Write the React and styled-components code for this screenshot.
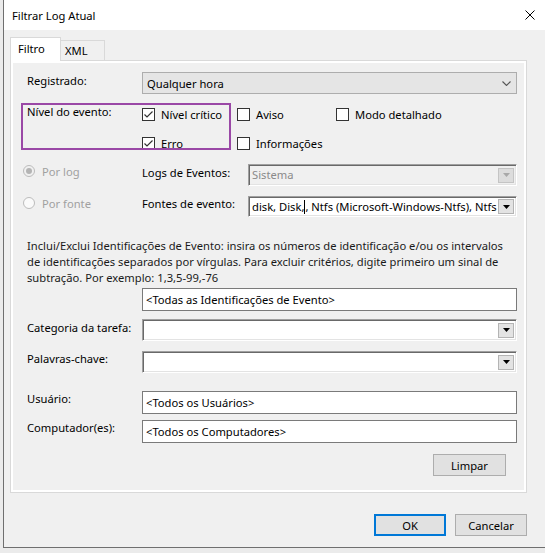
import React from 'react';
import styled, { createGlobalStyle } from 'styled-components';

const GlobalStyle = createGlobalStyle`
  html, body {
    margin: 0;
    background: #ebebeb;
  }
  body {
    font-family: "Noto Sans", "Open Sans", sans-serif;
    font-size: 11.2px;
    color: #000;
  }
  * {
    box-sizing: border-box;
  }
`;

const Window = styled.div`
  margin-left: 3px;
  width: 542px;
  background: #f0f0f0;
  border-left: 1px solid #6f6f6f;
  border-bottom: 1px solid #6f6f6f;
  display: flex;
  flex-direction: column;
`;

const TitleBar = styled.div`
  height: 30px;
  background: #fff;
  display: flex;
  align-items: center;
  justify-content: space-between;
  padding: 0 10px 0 8px;
`;

const Body = styled.div`
  padding: 7px 18px 11px 6px;
  display: flex;
  flex-direction: column;
`;

const TabStrip = styled.div`
  display: flex;
  align-items: flex-end;
  height: 24px;
  margin-bottom: -1px;
  position: relative;
  z-index: 1;
`;

const Tab = styled.div`
  width: ${p => p.$w}px;
  height: ${p => (p.$active ? 24 : 21)}px;
  background: ${p => (p.$active ? '#fff' : '#f0f0f0')};
  border: 1px solid #d9d9d9;
  border-bottom: ${p => (p.$active ? 'none' : '1px solid #d9d9d9')};
  border-left: ${p => (p.$active ? '1px solid #d9d9d9' : 'none')};
  padding: ${p => (p.$active ? '3px 0 0 7px' : '2px 0 0 4px')};
  line-height: 16px;
`;

const Panel = styled.div`
  position: relative;
  border: 1px solid #d9d9d9;
  background: #f0f0f0;
  box-shadow: inset 0 0 0 2px #fff;
  padding: 11px 9px 16px 16px;
  display: flex;
  flex-direction: column;
`;

const Highlight = styled.div`
  position: absolute;
  left: 10px;
  top: 42px;
  width: 210px;
  height: 47px;
  border: 2px solid #9a48a6;
  pointer-events: none;
  z-index: 2;
`;

const FieldRow = styled.div`
  display: grid;
  grid-template-columns: 115px 1fr;
  align-items: start;
  margin-top: ${p => p.$mt || 0}px;
`;

const Label = styled.div`
  line-height: 16px;
  padding-top: ${p => p.$pt ?? 1}px;
  white-space: nowrap;
  color: ${p => (p.$disabled ? '#a0a0a0' : '#000')};
`;

const Select = styled.div`
  height: 22px;
  background: #e5e5e5;
  border: 1px solid #adadad;
  display: flex;
  align-items: center;
  justify-content: space-between;
  padding: 0 5px 0 4px;
`;

const Combo = styled.div`
  height: ${p => p.$h}px;
  background: ${p => (p.$disabled ? '#f0f0f0' : '#fff')};
  color: ${p => (p.$disabled ? '#8a8a8a' : '#000')};
  border: 1px solid;
  border-color: #a0a0a0 #fff #fff #a0a0a0;
  box-shadow: inset 1px 1px 0 #696969, inset -1px -1px 0 #e3e3e3;
  display: flex;
  align-items: center;
  padding: 0 2px 0 3px;
`;

const ComboText = styled.div`
  flex: 1;
  min-width: 0;
  overflow: hidden;
  white-space: nowrap;
  line-height: 16px;
`;

const Caret = styled.span`
  display: inline-block;
  width: 1px;
  height: 14px;
  background: #000;
  vertical-align: -3px;
`;

const ArrowButton = styled.div`
  width: 16px;
  height: 15px;
  flex: none;
  background: ${p => (p.$disabled ? '#dcdcdc' : '#e3e3e3')};
  border: 1px solid ${p => (p.$disabled ? '#c4c4c4' : '#b4b4b4')};
  display: flex;
  align-items: center;
  justify-content: center;
`;

const TextBox = styled.div`
  height: 23px;
  background: #fff;
  border: 1px solid #7a7a7a;
  display: flex;
  align-items: center;
  padding-left: 3px;
  white-space: nowrap;
`;

const LevelRow = styled.div`
  display: grid;
  grid-template-columns: 115px 1fr;
  margin-top: 10px;
`;

const CheckGrid = styled.div`
  display: grid;
  grid-template-columns: 95px 99px auto;
  grid-auto-rows: 20px;
  row-gap: 9px;
`;

const CheckItem = styled.label`
  display: flex;
  align-items: center;
  gap: 6px;
  white-space: nowrap;
`;

const Box = styled.span`
  width: 13px;
  height: 13px;
  flex: none;
  background: #fff;
  border: 1px solid #333;
  display: flex;
  align-items: center;
  justify-content: center;
`;

const RadioRow = styled.div`
  display: grid;
  grid-template-columns: 119px 106px 1fr;
  align-items: start;
  margin-left: -4px;
  margin-top: ${p => p.$mt}px;
`;

const RadioItem = styled.div`
  display: flex;
  align-items: center;
  gap: 7px;
  height: 14px;
  color: #a0a0a0;
`;

const RadioCircle = styled.span`
  width: 12px;
  height: 12px;
  flex: none;
  border-radius: 50%;
  border: 1px solid #bcbcbc;
  background: ${p => (p.$checked ? '#f0f0f0' : '#fafafa')};
  display: flex;
  align-items: center;
  justify-content: center;

  &::after {
    content: '';
    display: ${p => (p.$checked ? 'block' : 'none')};
    width: 6px;
    height: 6px;
    border-radius: 50%;
    background: #b4b4b4;
  }
`;

const Help = styled.p`
  margin: 21px 0 0;
  line-height: 16px;
  color: #1a1a1a;
  white-space: nowrap;
`;

const ActionRow = styled.div`
  display: flex;
  justify-content: flex-end;
  gap: 9px;
  margin-top: ${p => p.$mt}px;
  margin-right: ${p => p.$mr || 0}px;
`;

const Button = styled.div`
  width: ${p => p.$w}px;
  height: 22px;
  background: #e1e1e1;
  border: ${p => (p.$primary ? '2px solid #0078d7' : '1px solid #adadad')};
  display: flex;
  align-items: center;
  justify-content: center;
`;

function Triangle({ disabled }) {
  return (
    <svg width="7" height="4" viewBox="0 0 7 4">
      <polygon points="0,0 7,0 3.5,4" fill={disabled ? '#a8a8a8' : '#000'} />
    </svg>
  );
}

function Checkbox({ checked, label }) {
  return (
    <CheckItem>
      <Box>
        {checked && (
          <svg width="11" height="11" viewBox="0 0 11 11">
            <polyline points="1.5,5.5 4,8 9.5,2.5" fill="none" stroke="#333" strokeWidth="1.2" />
          </svg>
        )}
      </Box>
      <span>{label}</span>
    </CheckItem>
  );
}

function Radio({ checked, label }) {
  return (
    <RadioItem>
      <RadioCircle $checked={checked} />
      <span>{label}</span>
    </RadioItem>
  );
}

export default function App() {
  return (
    <>
      <GlobalStyle />
      <Window>
        <TitleBar>
          <span>Filtrar Log Atual</span>
          <svg width="10" height="10" viewBox="0 0 10 10">
            <path d="M0.5 0.5 L9.5 9.5 M9.5 0.5 L0.5 9.5" stroke="#000" strokeWidth="1" />
          </svg>
        </TitleBar>
        <Body>
          <TabStrip>
            <Tab $active $w={51}>Filtro</Tab>
            <Tab $w={44}>XML</Tab>
          </TabStrip>
          <Panel>
            <Highlight />
            <FieldRow>
              <Label>Registrado:</Label>
              <Select>
                <span>Qualquer hora</span>
                <svg width="9" height="5" viewBox="0 0 9 5">
                  <polyline points="0.5,0.5 4.5,4.5 8.5,0.5" fill="none" stroke="#555" strokeWidth="1.1" />
                </svg>
              </Select>
            </FieldRow>

            <LevelRow>
              <Label $pt={0}>Nível do evento:</Label>
              <CheckGrid>
                <Checkbox checked label="Nível crítico" />
                <Checkbox label="Aviso" />
                <Checkbox label="Modo detalhado" />
                <Checkbox checked label="Erro" />
                <Checkbox label="Informações" />
              </CheckGrid>
            </LevelRow>

            <RadioRow $mt={11}>
              <Radio checked label="Por log" />
              <Label>Logs de Eventos:</Label>
              <Combo $h={22} $disabled>
                <ComboText>Sistema</ComboText>
                <ArrowButton $disabled>
                  <Triangle disabled />
                </ArrowButton>
              </Combo>
            </RadioRow>

            <RadioRow $mt={10}>
              <Radio label="Por fonte" />
              <Label $pt={0}>Fontes de evento:</Label>
              <Combo $h={21}>
                <ComboText>
                  disk, Disk,<Caret />, Ntfs (Microsoft-Windows-Ntfs), Ntfs
                </ComboText>
                <ArrowButton>
                  <Triangle />
                </ArrowButton>
              </Combo>
            </RadioRow>

            <Help>
              Inclui/Exclui Identificações de Evento: insira os números de identificação e/ou os intervalos
              <br />
              de identificações separados por vírgulas. Para excluir critérios, digite primeiro um sinal de
              <br />
              subtração. Por exemplo: 1,3,5-99,-76
            </Help>

            <FieldRow $mt={2}>
              <span />
              <TextBox>&lt;Todas as Identificações de Evento&gt;</TextBox>
            </FieldRow>

            <FieldRow $mt={8}>
              <Label>Categoria da tarefa:</Label>
              <Combo $h={22}>
                <ComboText />
                <ArrowButton>
                  <Triangle />
                </ArrowButton>
              </Combo>
            </FieldRow>

            <FieldRow $mt={10}>
              <Label $pt={0}>Palavras-chave:</Label>
              <Combo $h={22}>
                <ComboText />
                <ArrowButton>
                  <Triangle />
                </ArrowButton>
              </Combo>
            </FieldRow>

            <FieldRow $mt={18}>
              <Label $pt={0}>Usuário:</Label>
              <TextBox>&lt;Todos os Usuários&gt;</TextBox>
            </FieldRow>

            <FieldRow $mt={6}>
              <Label $pt={0}>Computador(es):</Label>
              <TextBox>&lt;Todos os Computadores&gt;</TextBox>
            </FieldRow>

            <ActionRow $mt={11} $mr={11}>
              <Button $w={73}>Limpar</Button>
            </ActionRow>
          </Panel>

          <ActionRow $mt={21}>
            <Button $primary $w={72}>OK</Button>
            <Button $w={72}>Cancelar</Button>
          </ActionRow>
        </Body>
      </Window>
    </>
  );
}
